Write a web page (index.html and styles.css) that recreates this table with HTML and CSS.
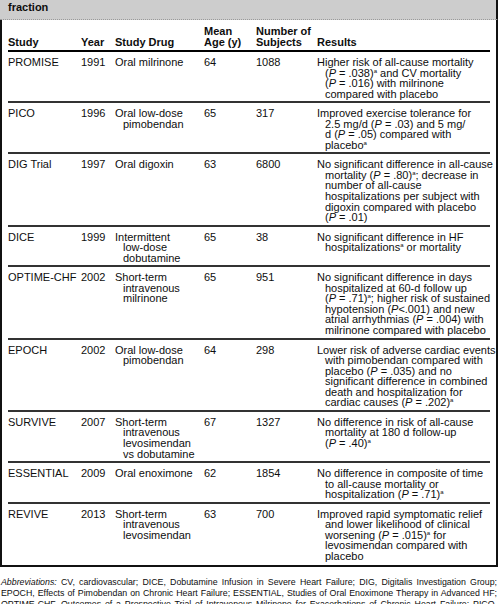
FILE: index.html
```html
<!DOCTYPE html>
<html lang="en">
<head>
    <meta charset="UTF-8">
    <title>Inotrope trials</title>
    <link rel="stylesheet" href="styles.css">
</head>
<body>
    <div class="caption">fraction</div>

    <div class="frame">
        <table class="trials">
            <colgroup>
                <col class="c-study">
                <col class="c-year">
                <col class="c-drug">
                <col class="c-age">
                <col class="c-n">
                <col>
            </colgroup>
            <thead>
                <tr>
                    <th>Study</th>
                    <th>Year</th>
                    <th>Study Drug</th>
                    <th>Mean<br>Age (y)</th>
                    <th>Number of<br>Subjects</th>
                    <th>Results</th>
                </tr>
            </thead>
            <tbody>
                <tr>
                    <td>PROMISE</td>
                    <td>1991</td>
                    <td class="hang">Oral milrinone</td>
                    <td>64</td>
                    <td>1088</td>
                    <td class="hang">Higher risk of all-cause mortality<br>(<i>P</i> = .038)<sup>a</sup> and CV mortality<br>(<i>P</i> = .016) with milrinone<br>compared with placebo</td>
                </tr>
                <tr>
                    <td>PICO</td>
                    <td>1996</td>
                    <td class="hang">Oral low-dose<br>pimobendan</td>
                    <td>65</td>
                    <td>317</td>
                    <td class="hang">Improved exercise tolerance for<br>2.5 mg/d (<i>P</i> = .03) and 5 mg/<br>d (<i>P</i> = .05) compared with<br>placebo<sup>a</sup></td>
                </tr>
                <tr>
                    <td>DIG Trial</td>
                    <td>1997</td>
                    <td class="hang">Oral digoxin</td>
                    <td>63</td>
                    <td>6800</td>
                    <td class="hang">No significant difference in all-cause<br>mortality (<i>P</i> = .80)<sup>a</sup>; decrease in<br>number of all-cause<br>hospitalizations per subject with<br>digoxin compared with placebo<br>(<i>P</i> = .01)</td>
                </tr>
                <tr>
                    <td>DICE</td>
                    <td>1999</td>
                    <td class="hang">Intermittent<br>low-dose<br>dobutamine</td>
                    <td>65</td>
                    <td>38</td>
                    <td class="hang">No significant difference in HF<br>hospitalizations<sup>a</sup> or mortality</td>
                </tr>
                <tr>
                    <td>OPTIME-CHF</td>
                    <td>2002</td>
                    <td class="hang">Short-term<br>intravenous<br>milrinone</td>
                    <td>65</td>
                    <td>951</td>
                    <td class="hang">No significant difference in days<br>hospitalized at 60-d follow up<br>(<i>P</i> = .71)<sup>a</sup>; higher risk of sustained<br>hypotension (<i>P</i>&lt;.001) and new<br>atrial arrhythmias (<i>P</i> = .004) with<br>milrinone compared with placebo</td>
                </tr>
                <tr>
                    <td>EPOCH</td>
                    <td>2002</td>
                    <td class="hang">Oral low-dose<br>pimobendan</td>
                    <td>64</td>
                    <td>298</td>
                    <td class="hang">Lower risk of adverse cardiac events<br>with pimobendan compared with<br>placebo (<i>P</i> = .035) and no<br>significant difference in combined<br>death and hospitalization for<br>cardiac causes (<i>P</i> = .202)<sup>a</sup></td>
                </tr>
                <tr>
                    <td>SURVIVE</td>
                    <td>2007</td>
                    <td class="hang">Short-term<br>intravenous<br>levosimendan<br>vs dobutamine</td>
                    <td>67</td>
                    <td>1327</td>
                    <td class="hang">No difference in risk of all-cause<br>mortality at 180 d follow-up<br>(<i>P</i> = .40)<sup>a</sup></td>
                </tr>
                <tr>
                    <td>ESSENTIAL</td>
                    <td>2009</td>
                    <td class="hang">Oral enoximone</td>
                    <td>62</td>
                    <td>1854</td>
                    <td class="hang">No difference in composite of time<br>to all-cause mortality or<br>hospitalization (<i>P</i> = .71)<sup>a</sup></td>
                </tr>
                <tr>
                    <td>REVIVE</td>
                    <td>2013</td>
                    <td class="hang">Short-term<br>intravenous<br>levosimendan</td>
                    <td>63</td>
                    <td>700</td>
                    <td class="hang">Improved rapid symptomatic relief<br>and lower likelihood of clinical<br>worsening (<i>P</i> = .015)<sup>a</sup> for<br>levosimendan compared with<br>placebo</td>
                </tr>
            </tbody>
        </table>
    </div>

    <div class="notes">
        <span><i>Abbreviations:</i> CV, cardiovascular; DICE, Dobutamine Infusion in Severe Heart Failure; DIG, Digitalis Investigation Group;</span>
        <span>EPOCH, Effects of Pimobendan on Chronic Heart Failure; ESSENTIAL, Studies of Oral Enoximone Therapy in Advanced HF;</span>
        <span>OPTIME-CHF, Outcomes of a Prospective Trial of Intravenous Milrinone for Exacerbations of Chronic Heart Failure; PICO,</span>
    </div>
</body>
</html>
```

FILE: styles.css
```css
body {
    margin: 0;
    width: 500px;
    overflow: hidden;
    font-family: "Liberation Sans", Arial, sans-serif;
    color: #0e0e0e;
    background: #fff;
}

.caption {
    width: 498px;
    box-sizing: border-box;
    padding: 2px 8px 6px;
    background: #cdcdcd;
    border-right: 2px solid #111;
    border-bottom: 1px dotted #9a9a9a;
    font-size: 11px;
    font-weight: bold;
    line-height: 11px;
}

.frame {
    width: 498px;
    box-sizing: border-box;
    padding: 0 6px;
    border: 2px solid #111;
    border-top: none;
}

.trials {
    width: 100%;
    table-layout: fixed;
    border-collapse: collapse;
    font-size: 11px;
    line-height: 10.55px;
}

.c-study { width: 73px; }
.c-year { width: 34px; }
.c-drug { width: 89px; }
.c-age { width: 52px; }
.c-n { width: 61px; }

.trials th {
    text-align: left;
    vertical-align: bottom;
    font-weight: bold;
    line-height: 11px;
    padding: 6px 0 2px;
    border-bottom: 2px solid #000;
    white-space: nowrap;
}

.trials td {
    vertical-align: top;
    padding: 5px 0 2px;
    border-bottom: 2px solid #333;
    white-space: nowrap;
}

.trials tbody tr:last-child td {
    border-bottom: none;
    padding-bottom: 4px;
}

.hang {
    padding-left: 8px !important;
    text-indent: -8px;
}

.trials sup {
    font-size: 6px;
    line-height: 0;
    vertical-align: 4px;
}

.notes {
    width: 497px;
    padding: 10px 0 0 1px;
    box-sizing: border-box;
    font-size: 8.8px;
    line-height: 11px;
}

.notes span {
    display: block;
    white-space: nowrap;
    text-align: justify;
    text-align-last: justify;
}
```
